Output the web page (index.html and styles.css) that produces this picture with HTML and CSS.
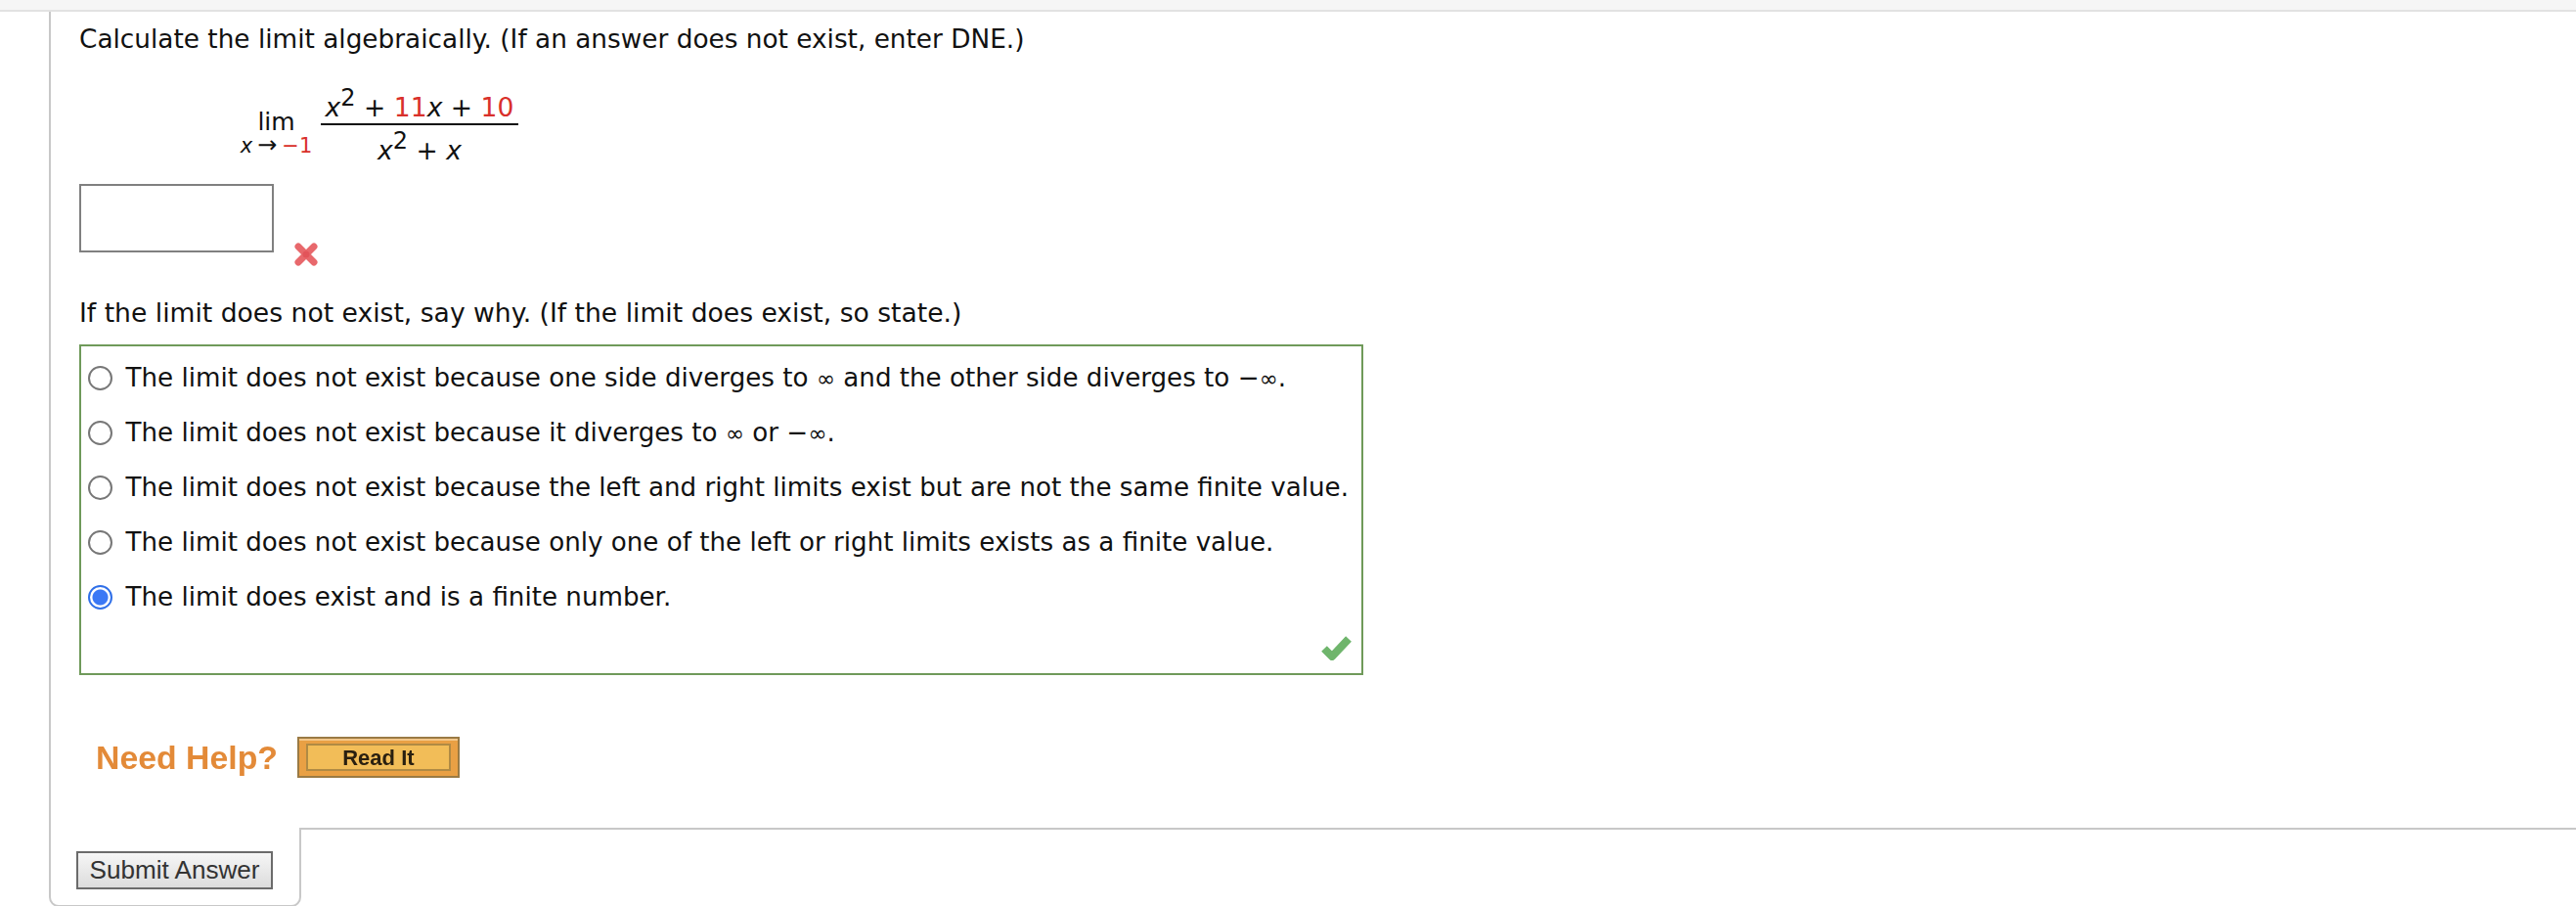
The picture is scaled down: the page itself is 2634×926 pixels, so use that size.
FILE: index.html
```html
<!DOCTYPE html>
<html lang="en">
<head>
<meta charset="utf-8">
<title>Limit question</title>
<link rel="stylesheet" href="styles.css">
</head>
<body>
<div class="topbar"></div>
<main class="question">
  <p class="line first">Calculate the limit algebraically. (If an answer does not exist, enter DNE.)</p>
  <div class="math">
    <div class="lim">
      <span class="lim-word">lim</span>
      <span class="lim-sub"><i>x</i><span class="arrow">→</span><span class="red">−1</span></span>
    </div>
    <div class="frac">
      <div class="num"><i>x</i><sup>2</sup> + <span class="red">11</span><i>x</i> + <span class="red">10</span></div>
      <div class="den"><i>x</i><sup>2</sup> + <i>x</i></div>
    </div>
  </div>
  <div class="answer-row">
    <input class="answer" type="text" aria-label="Answer">
    <svg class="cross" viewBox="0 0 26 26" width="26" height="26" aria-hidden="true">
      <path d="M5 5 21 21M21 5 5 21" fill="none" stroke="#e8686c" stroke-width="7" stroke-linecap="round"/>
      <circle cx="13" cy="13" r="3.5" fill="#e2545a"/>
    </svg>
  </div>
  <p class="line why">If the limit does not exist, say why. (If the limit does exist, so state.)</p>
  <div class="choices">
    <label class="choice"><input type="radio" name="why"><span>The limit does not exist because one side diverges to <span class="inf">∞</span> and the other side diverges to −<span class="inf">∞</span>.</span></label>
    <label class="choice"><input type="radio" name="why"><span>The limit does not exist because it diverges to <span class="inf">∞</span> or −<span class="inf">∞</span>.</span></label>
    <label class="choice"><input type="radio" name="why"><span>The limit does not exist because the left and right limits exist but are not the same finite value.</span></label>
    <label class="choice"><input type="radio" name="why"><span>The limit does not exist because only one of the left or right limits exists as a finite value.</span></label>
    <label class="choice"><input type="radio" name="why" checked><span>The limit does exist and is a finite number.</span></label>
    <div class="check-row">
      <svg class="check" viewBox="0 0 32 26" width="32" height="26" aria-hidden="true">
        <path d="M4 14 12 22 29 4" fill="none" stroke="#6fb56c" stroke-width="8" stroke-linejoin="round"/>
      </svg>
    </div>
  </div>
  <div class="help">
    <span class="help-label">Need Help?</span>
    <button class="read" type="button"><span class="read-inner">Read It</span></button>
  </div>
</main>
<footer class="foot">
  <div class="tab"><button class="submit" type="button">Submit Answer</button></div>
  <div class="rest"></div>
</footer>
</body>
</html>
```
FILE: styles.css
```css
* { box-sizing: border-box; }
html, body { margin: 0; padding: 0; background: #fff; }
body {
  width: 2634px;
  height: 926px;
  overflow: hidden;
  font-family: "DejaVu Sans", Verdana, sans-serif;
  font-size: 26.6px;
  color: #111;
}
.topbar { height: 12px; background: #f6f6f6; border-bottom: 2px solid #e2e2e2; }
.question { margin-left: 50px; padding: 8px 0 51px 29px; border-left: 2px solid #c8c8c8; }
.line { margin: 0; height: 40px; line-height: 40px; white-space: nowrap; }
.first { font-size: 26.33px; }
.math { display: flex; align-items: flex-start; height: 110px; margin: 18px 0 0 164px; }
.lim { width: 75px; margin: 34px 8px 0 0; display: flex; flex-direction: column; align-items: center; }
.lim-word { font-size: 25px; line-height: 26px; }
.lim-sub { font-size: 21px; line-height: 22px; white-space: nowrap; }
.arrow { font-size: 24px; margin: 0 5px; line-height: 0; }
.red { color: #d9302a; }
.frac { width: 202px; margin-top: 6px; text-align: center; line-height: 40px; white-space: nowrap; }
.num { border-bottom: 2px solid #111; height: 44px; padding-top: 6px; }
.den { height: 44px; padding-top: 6px; }
sup { font-size: 24px; line-height: 0; vertical-align: 11px; }
.answer-row { display: flex; align-items: flex-start; }
.answer { width: 199px; height: 70px; border: 2px solid #808080; background: #fff; padding: 0; margin: 0; border-radius: 0; }
.cross { margin: 59px 0 0 20px; filter: blur(0.5px); }
.why { margin-top: 27px; }
.choices { margin-top: 12px; width: 1313px; height: 338px; border: 2px solid #6f9a5a; padding-top: 4px; font-size: 26.15px; }
.choice { display: flex; align-items: center; height: 56px; padding-left: 7px; gap: 13.5px; white-space: nowrap; }
.choice input {
  appearance: none;
  width: 25px;
  height: 25px;
  margin: 0;
  border: 2px solid #777;
  border-radius: 50%;
  background: #fff;
  flex: none;
}
.choice input:checked { border-color: #2f6fe8; background: radial-gradient(circle, #3b78f5 0 7.5px, #fff 8.5px); }
.inf { font-size: 23px; }
.check-row { display: flex; justify-content: flex-end; padding: 11px 10px 0 0; }
.check { filter: blur(0.5px); }
.help { display: flex; align-items: center; gap: 20px; margin: 63px 0 0 17px; height: 42px; filter: blur(0.5px); }
.help-label { font-family: "Liberation Sans", Arial, sans-serif; font-weight: 700; font-size: 33.8px; color: #e38a38; }
.read {
  width: 166px;
  height: 42px;
  padding: 5px 7px;
  background: #e9a044;
  border: 2px solid #9a7a44;
  box-shadow: inset 0 2px 0 #f3c78a;
  font: 700 22px "Liberation Sans", Arial, sans-serif;
  color: #2a2010;
}
.read-inner { display: block; height: 100%; line-height: 26px; background: #f2bd58; border: 2px solid #b08a44; }
.foot { display: flex; margin-left: 50px; height: 81px; }
.tab { width: 258px; padding: 24px 0 0 26px; border: 2px solid #c8c8c8; border-top: 0; border-radius: 0 0 10px 10px; }
.submit {
  width: 201px;
  height: 39px;
  padding: 0;
  border: 2px solid #6b6b6b;
  background: linear-gradient(#f6f6f6, #dcdcdc);
  font: 26.1px "Liberation Sans", Arial, sans-serif;
  color: #333;
}
.rest { flex: 1; border-top: 2px solid #c8c8c8; }
```
